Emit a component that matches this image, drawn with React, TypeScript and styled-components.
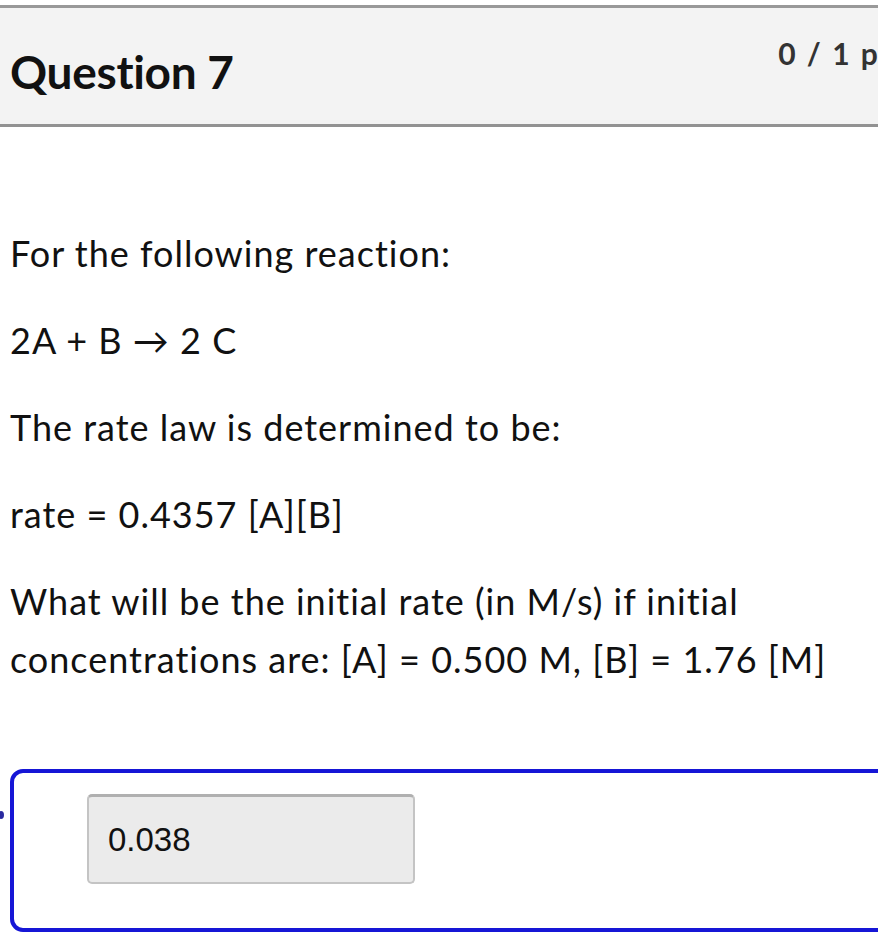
import React from "react";
import styled, { createGlobalStyle } from "styled-components";

const Global = createGlobalStyle`
  html, body { margin: 0; padding: 0; background: #ffffff; }
  body { font-family: Lato, "Open Sans", sans-serif; color: #111; overflow: hidden; }
`;

const Page = styled.div`
  width: 878px;
  height: 938px;
  overflow: hidden;
  padding-top: 5px;
  box-sizing: border-box;
`;

const Header = styled.header`
  height: 122px;
  box-sizing: border-box;
  border-top: 3px solid #999999;
  border-bottom: 3px solid #929292;
  background: #f3f3f3;
  display: flex;
  justify-content: space-between;
  align-items: flex-start;
  padding: 0 0 0 10px;
  white-space: nowrap;
  overflow: hidden;
`;

const Title = styled.h2`
  margin: 34px 0 0 0;
  font-family: Lato, sans-serif;
  font-weight: 700;
  font-size: 46px;
  line-height: 60px;
  color: #111;
  letter-spacing: -0.3px;
`;

const Points = styled.div`
  margin: 25px -30px 0 0;
  font-family: Lato, sans-serif;
  font-weight: 700;
  font-size: 30px;
  line-height: 40px;
  color: #333;
  letter-spacing: 2px;
`;

const Body = styled.div`
  padding: 97px 10px 0 10px;
`;

const Para = styled.p`
  margin: 0 0 29px 0;
  font-family: Lato, sans-serif;
  font-size: 36px;
  line-height: 58px;
  letter-spacing: 1px;
  color: #111;
`;

const AnswerBox = styled.div`
  position: relative;
  margin: 81px -40px 0 10px;
  height: 163px;
  box-sizing: border-box;
  border: 4px solid #1616d6;
  border-radius: 13px;
  padding: 21px 0 0 73px;

  &::before {
    content: "";
    position: absolute;
    left: -16px;
    top: 38px;
    width: 6px;
    height: 8px;
    border-radius: 50%;
    background: #2a2aa0;
  }
`;

const Input = styled.div`
  width: 328px;
  height: 90px;
  box-sizing: border-box;
  background: #ebebeb;
  border: 2px solid #c4c4c4;
  border-top: 3px solid #b0b0b0;
  border-radius: 5px;
  display: flex;
  align-items: center;
  padding: 0 0 0 19px;
  font-family: "Liberation Sans", Arial, sans-serif;
  font-size: 33px;
  color: #111;
`;

export default function App() {
  return (
    <>
      <Global />
      <Page>
        <Header>
          <Title>Question 7</Title>
          <Points>0 / 1 pts</Points>
        </Header>
        <Body>
          <Para>For the following reaction:</Para>
          <Para>2A + B → 2 C</Para>
          <Para>The rate law is determined to be:</Para>
          <Para>rate = 0.4357 [A][B]</Para>
          <Para>
            What will be the initial rate (in M/s) if initial concentrations are: [A] = 0.500 M, [B] = 1.76 [M]
          </Para>
        </Body>
        <AnswerBox>
          <Input>0.038</Input>
        </AnswerBox>
      </Page>
    </>
  );
}
